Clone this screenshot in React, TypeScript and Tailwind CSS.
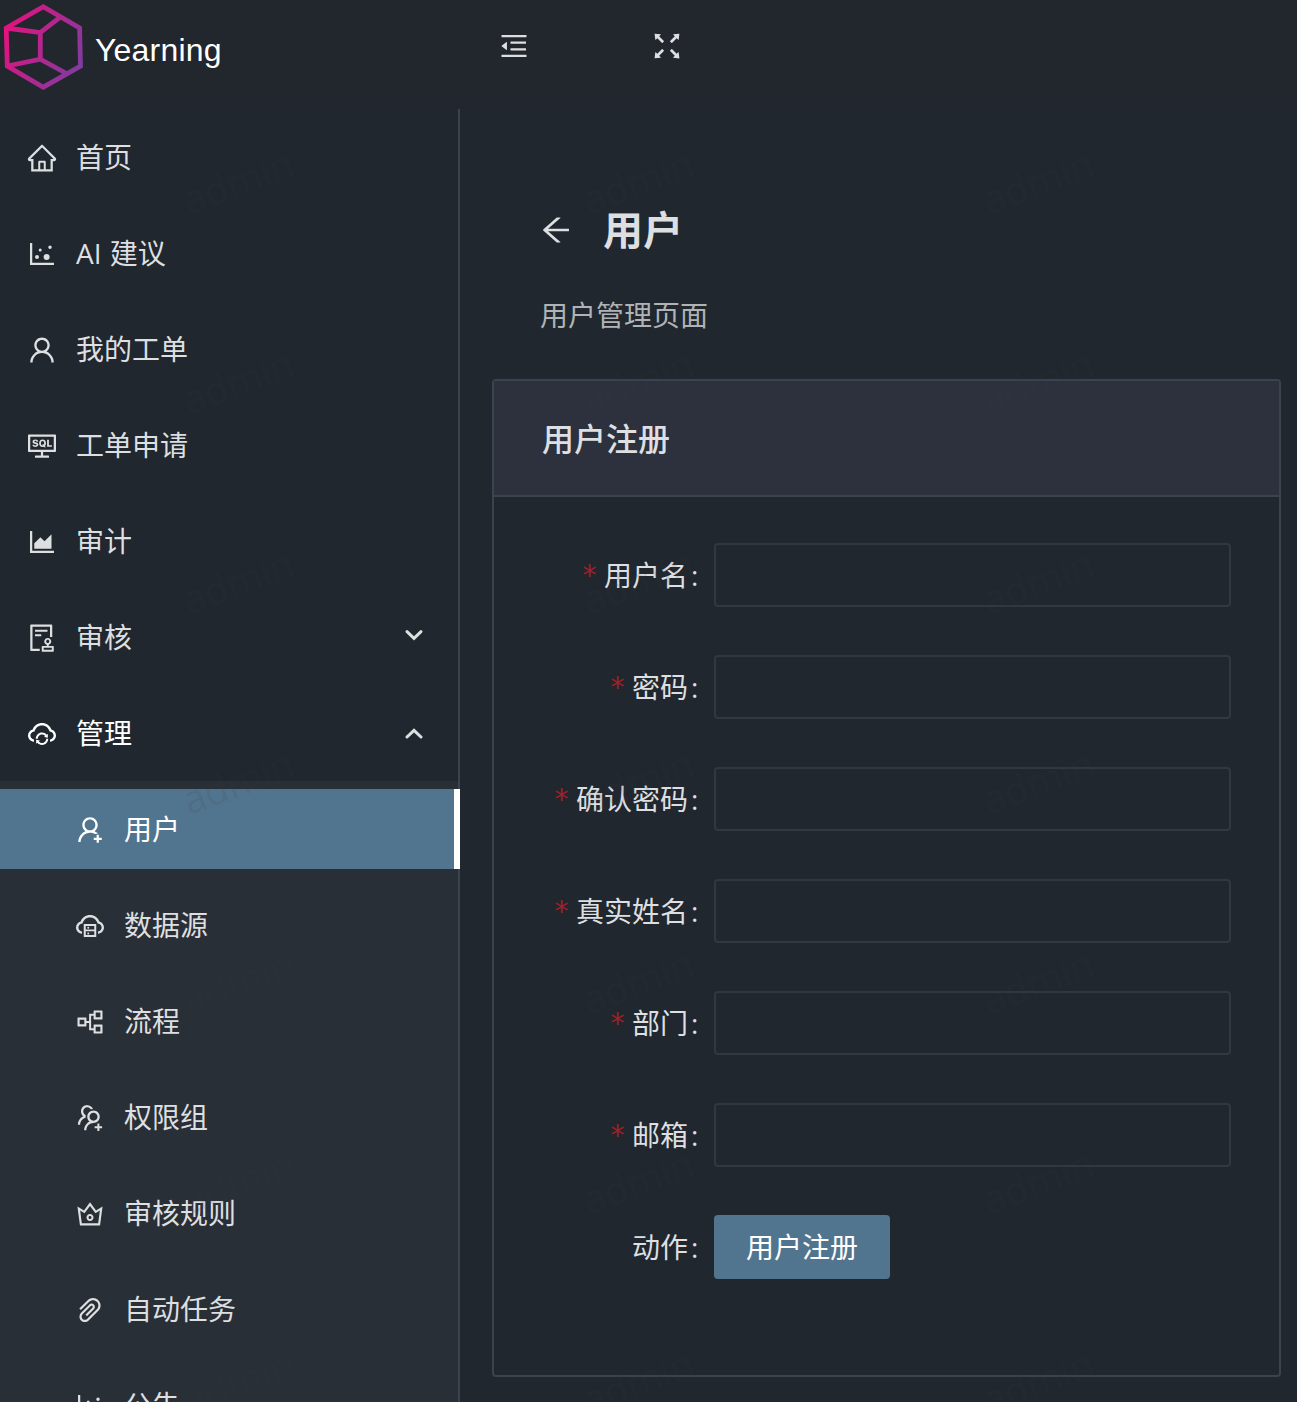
import type { IconType } from "react-icons";
import {
  AiOutlineAreaChart,
  AiOutlineArrowLeft,
  AiOutlineAudit,
  AiOutlineCloudServer,
  AiOutlineCloudSync,
  AiOutlineConsoleSql,
  AiOutlineCrown,
  AiOutlineDotChart,
  AiOutlineFullscreen,
  AiOutlineHome,
  AiOutlineMenuFold,
  AiOutlinePaperClip,
  AiOutlinePartition,
  AiOutlineUser,
  AiOutlineUserAdd,
  AiOutlineUsergroupAdd,
} from "react-icons/ai";
import clsx from "clsx";

interface MenuEntry {
  label: string;
  icon: IconType;
  arrow?: "up" | "down";
}

const menu: MenuEntry[] = [
  { label: "首页", icon: AiOutlineHome },
  { label: "AI 建议", icon: AiOutlineDotChart },
  { label: "我的工单", icon: AiOutlineUser },
  { label: "工单申请", icon: AiOutlineConsoleSql },
  { label: "审计", icon: AiOutlineAreaChart },
  { label: "审核", icon: AiOutlineAudit, arrow: "down" },
  { label: "管理", icon: AiOutlineCloudSync, arrow: "up" },
];

const subMenu: MenuEntry[] = [
  { label: "用户", icon: AiOutlineUserAdd },
  { label: "数据源", icon: AiOutlineCloudServer },
  { label: "流程", icon: AiOutlinePartition },
  { label: "权限组", icon: AiOutlineUsergroupAdd },
  { label: "审核规则", icon: AiOutlineCrown },
  { label: "自动任务", icon: AiOutlinePaperClip },
  { label: "公告", icon: AiOutlineDotChart },
];

const fields = ["用户名", "密码", "确认密码", "真实姓名", "部门", "邮箱"];

const Logo = () => (
  <svg width="88" height="94" viewBox="0 0 88 94" fill="none" className="shrink-0">
    <defs>
      <linearGradient id="logo" x1="4" y1="28" x2="84" y2="66" gradientUnits="userSpaceOnUse">
        <stop offset="0" stopColor="#e4127f" />
        <stop offset="1" stopColor="#7f3c9f" />
      </linearGradient>
    </defs>
    <g stroke="url(#logo)" strokeWidth="4.8">
      <path d="M43.3 6.7 79.6 28 80.5 66 43.3 87.2 7.3 66 6.2 28Z" />
      <path d="M6.2 28 40.3 32.6 60.5 16.8M40.3 32.6V59.2M7.3 66 40.3 59.2 66.5 73.5" />
    </g>
  </svg>
);

const Arrow = ({ up }: { up: boolean }) => (
  <svg
    width="20"
    height="12"
    viewBox="0 0 20 12"
    fill="none"
    stroke="#dddfe0"
    strokeWidth="3"
    strokeLinecap="round"
    className={clsx("ml-auto mr-[34px]", !up && "-mt-1")}
  >
    <path d={up ? "M3 10 10 3.3 17 10" : "M3 2.6 10 9.3 17 2.6"} />
  </svg>
);

const Header = () => (
  <header className="flex h-[109px] shrink-0 items-start bg-[#22262d] text-[#dddee0]">
    <div className="flex w-[498px] items-center">
      <Logo />
      <span className="ml-[7px] mt-[6px] font-['Liberation_Sans',sans-serif] text-[32px] leading-10 tracking-[0.2px] text-white">
        Yearning
      </span>
    </div>
    <div className="mt-7 flex items-center gap-[119px]">
      <AiOutlineMenuFold size={32} />
      <AiOutlineFullscreen size={36} />
    </div>
  </header>
);

const Sidebar = () => (
  <aside className="w-[460px] shrink-0 border-r-2 border-[#3d424f]">
    <ul className="flex flex-col gap-4 py-2">
      {menu.map(({ label, icon: Icon, arrow }) => (
        <li
          key={label}
          className={clsx("flex h-20 items-center pl-[26px]", arrow === "up" && "text-white")}
        >
          <Icon size={32} className="mt-0.5" />
          <span className="ml-[18px] [word-spacing:1px]">{label}</span>
          {arrow && <Arrow up={arrow === "up"} />}
        </li>
      ))}
    </ul>
    <ul className="flex flex-col gap-4 bg-[#292f36] py-2">
      {subMenu.map(({ label, icon: Icon }, i) => (
        <li
          key={label}
          className={clsx(
            "flex h-20 items-center pl-[74px]",
            i === 0 && "-mr-0.5 border-r-[6px] border-white bg-[#52758f] text-white"
          )}
        >
          <Icon size={32} className="mt-0.5" />
          <span className="ml-[18px]">{label}</span>
        </li>
      ))}
    </ul>
  </aside>
);

const Label = ({ text, required }: { text: string; required?: boolean }) => (
  <label className="flex w-[220px] items-center justify-end pr-4">
    {required && (
      <span className="mr-1.5 w-[17px] translate-y-px text-center font-['DejaVu_Sans_Mono',monospace] text-[#a61d24]">
        *
      </span>
    )}
    {text}
    <span className="ml-[3px] w-[7px]">:</span>
  </label>
);

const RegisterCard = () => (
  <section className="ml-8 mr-4 mt-[42px] h-[998px] rounded border-2 border-[#3d424f]">
    <h2 className="flex h-[116px] items-center border-b-2 border-[#3d424f] bg-[#2c313d] pl-12 pt-0.5 text-[32px] font-medium">
      用户注册
    </h2>
    <form className="mt-[46px] flex flex-col gap-12 pr-12">
      {fields.map((field) => (
        <div key={field} className="flex h-16">
          <Label text={field} required />
          <input className="min-w-0 flex-1 rounded border-2 border-[#32383f] bg-transparent px-5 outline-none" />
        </div>
      ))}
      <div className="flex h-16">
        <Label text="动作" />
        <button type="button" className="w-44 rounded bg-[#52758f] text-white">
          用户注册
        </button>
      </div>
    </form>
  </section>
);

const Watermark = () => (
  <div className="pointer-events-none absolute left-[38px] top-[81px] grid select-none auto-rows-[200px] grid-cols-[repeat(3,400px)]">
    {Array.from({ length: 21 }, (_, i) => (
      <span
        key={i}
        className="flex -rotate-[20deg] items-center justify-center font-['Open_Sans',sans-serif] text-[39px] text-[#3c3c3c]/15"
      >
        admin
      </span>
    ))}
  </div>
);

export default function App() {
  return (
    <div className="relative flex h-screen flex-col overflow-hidden bg-[#20272e] font-['Open_Sans','Noto_Sans_CJK_SC',sans-serif] text-[28px] leading-[44px] text-[#dddfe0]">
      <Header />
      <div className="flex min-h-0 flex-1">
        <Sidebar />
        <main className="min-w-0 flex-1">
          <div className="ml-[78px] mt-[93px] flex h-14 items-center">
            <AiOutlineArrowLeft size={36} />
            <h1 className="ml-[29px] text-[40px] font-bold">用户</h1>
          </div>
          <p className="ml-20 mt-[35px] text-[#b0b3b5]">用户管理页面</p>
          <RegisterCard />
        </main>
      </div>
      <Watermark />
    </div>
  );
}
